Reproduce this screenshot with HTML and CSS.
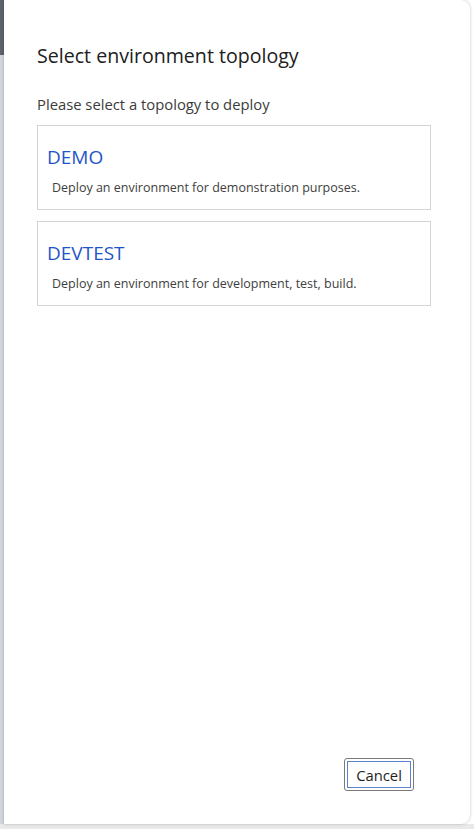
FILE: index.html
```html
<!DOCTYPE html>
<html lang="en">
<head>
<meta charset="utf-8">
<title>Select environment topology</title>
<link rel="stylesheet" href="styles.css">
</head>
<body>
<div class="screen">
  <div class="backdrop-strip">
    <div class="strip-dark"></div>
    <div class="strip-light"></div>
  </div>
  <div class="dialog">
    <h1 class="title">Select environment topology</h1>
    <p class="prompt">Please select a topology to deploy</p>
    <div class="options">
      <div class="option">
        <div class="option-name">DEMO</div>
        <div class="option-desc">Deploy an environment for demonstration purposes.</div>
      </div>
      <div class="option">
        <div class="option-name">DEVTEST</div>
        <div class="option-desc">Deploy an environment for development, test, build.</div>
      </div>
    </div>
    <div class="footer">
      <button class="btn-cancel"><span class="btn-inner">Cancel</span></button>
    </div>
  </div>
</div>
</body>
</html>
```
FILE: styles.css
```css
html, body {
  margin: 0;
  padding: 0;
  width: 474px;
  height: 829px;
  overflow: hidden;
  background: #e9e9e9;
  font-family: "Open Sans", "Noto Sans", sans-serif;
}
.screen {
  display: flex;
  height: 824px;
  background: #ffffff;
}
.backdrop-strip {
  width: 4px;
  display: flex;
  flex-direction: column;
}
.strip-dark {
  height: 55px;
  background: #5d626b;
}
.strip-light {
  flex: 1;
  background: #d2d5da;
}
.dialog {
  width: 466px;
  height: 824px;
  box-sizing: border-box;
  background: #ffffff;
  border-radius: 0 9px 9px 0;
  box-shadow: 0 0 3px rgba(0,0,0,0.25);
  padding: 42px 39px 0 33px;
  display: flex;
  flex-direction: column;
}
.title {
  margin: 0;
  font-size: 19.6px;
  font-weight: 400;
  color: #202020;
  line-height: 28px;
}
.prompt {
  margin: 24px 0 0 0;
  font-size: 14.8px;
  color: #3b3b3b;
  line-height: 20px;
}
.options {
  margin-top: 11px;
  display: flex;
  flex-direction: column;
  gap: 11px;
}
.option {
  border: 1px solid #d4d4d4;
  height: 85px;
  box-sizing: border-box;
  padding: 19px 10px 0 9px;
}
.option-name {
  font-size: 19px;
  color: #1f55c8;
  line-height: 24px;
}
.option-desc {
  margin-top: 10px;
  padding-left: 5px;
  font-size: 12.5px;
  color: #404040;
  line-height: 18px;
}
.footer {
  margin-top: auto;
  margin-bottom: 33px;
  display: flex;
  justify-content: flex-end;
  padding-right: 17px;
}
.btn-cancel {
  width: 70px;
  height: 33px;
  padding: 2px;
  border: 1px solid #7b7b7b;
  border-radius: 3px;
  background: #ffffff;
  box-sizing: border-box;
  font-family: inherit;
  display: flex;
}
.btn-inner {
  flex: 1;
  border: 1px solid #5c82cf;
  display: flex;
  align-items: center;
  justify-content: center;
  font-size: 14.8px;
  color: #1e1e1e;
}
```
